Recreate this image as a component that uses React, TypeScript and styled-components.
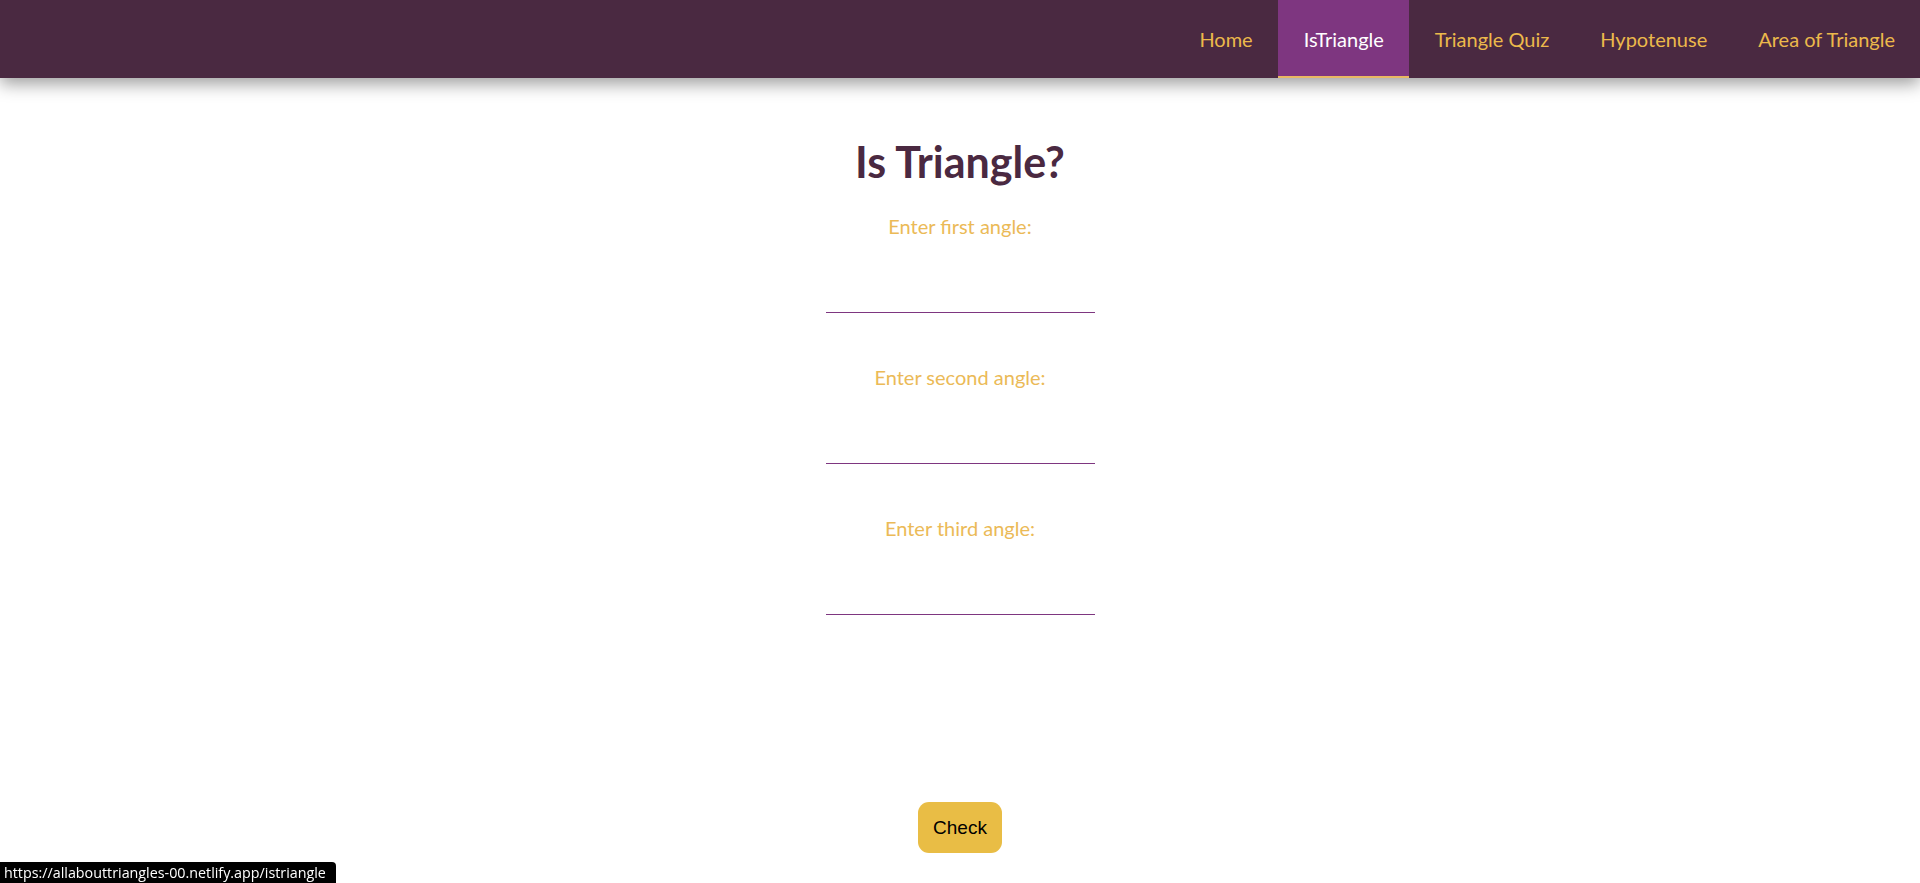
import React, { useState } from 'react';
import styled, { createGlobalStyle } from 'styled-components';

const links = ['Home', 'IsTriangle', 'Triangle Quiz', 'Hypotenuse', 'Area of Triangle'];
const fields = ['Enter first angle:', 'Enter second angle:', 'Enter third angle:'];

function App() {
  const [angles, setAngles] = useState(['', '', '']);

  const onChange = (index: number, value: string) => {
    const next = [...angles];
    next[index] = value;
    setAngles(next);
  };

  return (
    <>
      <GlobalStyle />
      <NavBar>
        <NavList>
          {links.map((link) => (
            <NavItem key={link} $active={link === 'IsTriangle'}>
              {link}
            </NavItem>
          ))}
        </NavList>
      </NavBar>
      <Main>
        <Title>Is Triangle?</Title>
        {fields.map((label, i) => (
          <Field key={label}>
            <Label htmlFor={`angle-${i}`}>{label}</Label>
            <AngleInput
              id={`angle-${i}`}
              type="number"
              value={angles[i]}
              onChange={(e) => onChange(i, e.target.value)}
            />
          </Field>
        ))}
        <CheckButton>Check</CheckButton>
      </Main>
      <StatusBar>https://allabouttriangles-00.netlify.app/istriangle</StatusBar>
    </>
  );
}

export default App;

const GlobalStyle = createGlobalStyle`
  html, body {
    margin: 0;
    padding: 0;
    background: #ffffff;
    font-family: Lato, "Open Sans", sans-serif;
  }
  * {
    box-sizing: border-box;
  }
`;

const NavBar = styled.nav`
  height: 78px;
  background-color: #4a2941;
  box-shadow: 0 6px 16px rgba(0, 0, 0, 0.38);
  display: flex;
  justify-content: flex-end;
  position: relative;
  z-index: 1;
`;

const NavList = styled.ul`
  display: flex;
  margin: 0;
  padding: 0;
  list-style: none;
`;

const NavItem = styled.li<{ $active?: boolean }>`
  display: flex;
  align-items: center;
  padding: 2px 25px 0 26px;
  height: 100%;
  font-size: 20px;
  color: ${(p) => (p.$active ? '#ffffff' : '#ecb94b')};
  background-color: ${(p) => (p.$active ? '#7e3680' : 'transparent')};
  border-bottom: 2px solid ${(p) => (p.$active ? '#e9b863' : 'transparent')};
  cursor: pointer;
`;

const Main = styled.main`
  display: flex;
  flex-direction: column;
  align-items: center;
  padding-top: 59px;
`;

const Title = styled.h1`
  margin: 0 0 27px;
  font-size: 43px;
  line-height: 50px;
  font-weight: 700;
  color: #4a2941;
`;

const Field = styled.div`
  display: flex;
  flex-direction: column;
  align-items: center;
  margin-bottom: 52px;
`;

const Label = styled.label`
  font-size: 20px;
  line-height: 24px;
  color: #ebba57;
`;

const AngleInput = styled.input`
  width: 269px;
  height: 43px;
  margin-top: 32px;
  border: none;
  border-bottom: 1px solid #7e3680;
  outline: none;
  font-size: 18px;
  text-align: center;
  font-family: inherit;
  background: transparent;
  &::-webkit-inner-spin-button,
  &::-webkit-outer-spin-button {
    -webkit-appearance: none;
    margin: 0;
  }
`;

const CheckButton = styled.button`
  margin-top: 135px;
  width: 84px;
  height: 51px;
  background-color: #e9bd45;
  color: #000000;
  border: none;
  border-radius: 11px;
  font-family: "Liberation Sans", Arial, sans-serif;
  font-size: 19px;
  cursor: pointer;
`;

const StatusBar = styled.div`
  position: fixed;
  left: 0;
  bottom: 0;
  height: 21px;
  padding: 0 10px 0 4px;
  background-color: #000000;
  color: #ffffff;
  border-top-right-radius: 4px;
  font-family: "Open Sans", sans-serif;
  font-size: 14.3px;
  line-height: 21px;
`;
